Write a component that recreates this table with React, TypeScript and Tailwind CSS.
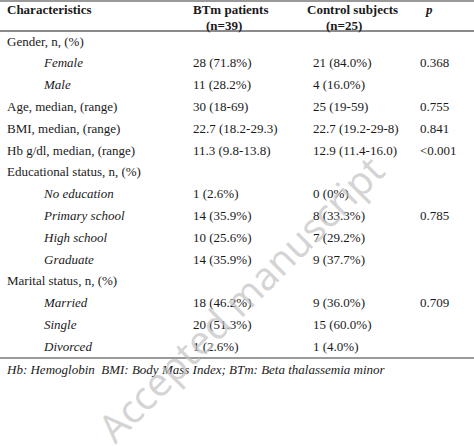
const ROWS: { label: string; sub?: boolean; btm: string; ctrl: string; p: string }[] = [
  { label: "Gender, n, (%)", btm: "", ctrl: "", p: "" },
  { label: "Female", sub: true, btm: "28 (71.8%)", ctrl: "21 (84.0%)", p: "0.368" },
  { label: "Male", sub: true, btm: "11 (28.2%)", ctrl: "4 (16.0%)", p: "" },
  { label: "Age, median, (range)", btm: "30 (18-69)", ctrl: "25 (19-59)", p: "0.755" },
  { label: "BMI, median, (range)", btm: "22.7 (18.2-29.3)", ctrl: "22.7 (19.2-29-8)", p: "0.841" },
  { label: "Hb g/dl, median, (range)", btm: "11.3 (9.8-13.8)", ctrl: "12.9 (11.4-16.0)", p: "<0.001" },
  { label: "Educational status, n, (%)", btm: "", ctrl: "", p: "" },
  { label: "No education", sub: true, btm: "1 (2.6%)", ctrl: "0 (0%)", p: "" },
  { label: "Primary school", sub: true, btm: "14 (35.9%)", ctrl: "8 (33.3%)", p: "0.785" },
  { label: "High school", sub: true, btm: "10 (25.6%)", ctrl: "7 (29.2%)", p: "" },
  { label: "Graduate", sub: true, btm: "14 (35.9%)", ctrl: "9 (37.7%)", p: "" },
  { label: "Marital status, n, (%)", btm: "", ctrl: "", p: "" },
  { label: "Married", sub: true, btm: "18 (46.2%)", ctrl: "9 (36.0%)", p: "0.709" },
  { label: "Single", sub: true, btm: "20 (51.3%)", ctrl: "15 (60.0%)", p: "" },
  { label: "Divorced", sub: true, btm: "1 (2.6%)", ctrl: "1 (4.0%)", p: "" },
];

export default function App() {
  return (
    <div
      className="relative w-[474px] h-[446px] overflow-hidden bg-white text-[13px] text-[#1a1a1a]"
      style={{ fontFamily: '"Liberation Serif", "Times New Roman", serif' }}
    >
      <div className="h-[2px] bg-[#9a9a9a]" />

      {/* header */}
      <div className="grid grid-cols-[193px_114px_113px_1fr] h-[28px] font-bold leading-[16px]">
        <div className="pl-[7px]">Characteristics</div>
        <div>
          <div>BTm patients</div>
          <div className="pl-[13px]">(n=39)</div>
        </div>
        <div>
          <div>Control subjects</div>
          <div className="pl-[19px]">(n=25)</div>
        </div>
        <div className="pl-[6px] italic">p</div>
      </div>
      <div className="h-[1.5px] bg-[#8a8a8a]" />

      {/* body */}
      <div className="flex flex-col -mt-[1px]">
        {ROWS.map((r) => (
          <div key={r.label} className="grid grid-cols-[193px_120px_107px_1fr] h-[21.8px] items-center">
            <div className={r.sub ? "pl-[44px] italic" : "pl-[7px]"}>{r.label}</div>
            <div>{r.btm}</div>
            <div>{r.ctrl}</div>
            <div>{r.p}</div>
          </div>
        ))}
      </div>
      <div className="h-[2px] bg-[#9a9a9a]" />

      <div className="pl-[7px] pt-[3px] italic leading-[16px]">
        Hb: Hemoglobin&nbsp; BMI: Body Mass Index; BTm: Beta thalassemia minor
      </div>

      {/* watermark */}
      <div
        className="absolute left-[240px] top-[298px] -translate-x-1/2 -translate-y-1/2 -rotate-45 whitespace-nowrap text-[39px] leading-none text-[#c2c2c2] opacity-70 pointer-events-none"
        style={{ fontFamily: '"Open Sans", sans-serif' }}
      >
        Accepted manuscript
      </div>
    </div>
  );
}
